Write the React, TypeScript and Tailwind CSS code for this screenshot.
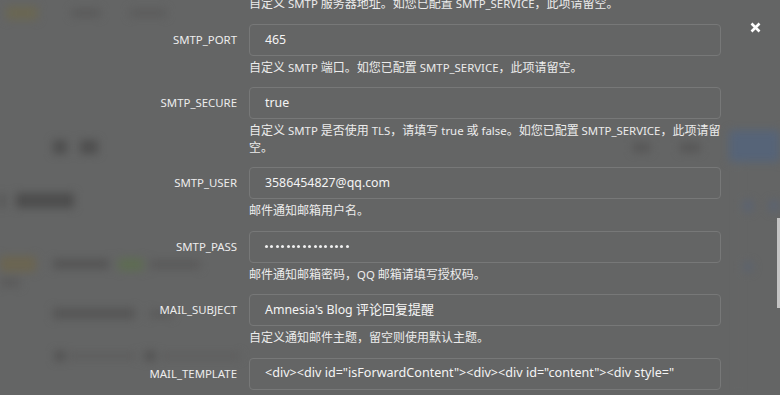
import React from "react";

type Row = {
  label: string;
  value?: string;
  password?: boolean;
  code?: boolean;
  help: string[];
};

const rows: Row[] = [
  {
    label: "SMTP_HOST",
    value: "",
    help: ["自定义 SMTP 服务器地址。如您已配置 SMTP_SERVICE，此项请留空。"],
  },
  {
    label: "SMTP_PORT",
    value: "465",
    help: ["自定义 SMTP 端口。如您已配置 SMTP_SERVICE，此项请留空。"],
  },
  {
    label: "SMTP_SECURE",
    value: "true",
    help: [
      "自定义 SMTP 是否使用 TLS，请填写 true 或 false。如您已配置 SMTP_SERVICE，此项请留",
      "空。",
    ],
  },
  {
    label: "SMTP_USER",
    value: "3586454827@qq.com",
    help: ["邮件通知邮箱用户名。"],
  },
  {
    label: "SMTP_PASS",
    value: "",
    password: true,
    help: ["邮件通知邮箱密码，QQ 邮箱请填写授权码。"],
  },
  {
    label: "MAIL_SUBJECT",
    value: "Amnesia's Blog 评论回复提醒",
    help: ["自定义通知邮件主题，留空则使用默认主题。"],
  },
  {
    label: "MAIL_TEMPLATE",
    value: '<div><div id="isForwardContent"><div><div id="content"><div style="',
    code: true,
    help: [],
  },
];

const dots = Array.from({ length: 16 }, (_, i) => i);

const cjk = /[\u3000-\u303f\u4e00-\u9fff\uff00-\uffef]/;

function Mixed({ text, latinClass }: { text: string; latinClass: string }) {
  const runs: { t: string; c: boolean }[] = [];
  for (const ch of text) {
    const c = cjk.test(ch);
    const last = runs[runs.length - 1];
    if (last && last.c === c) last.t += ch;
    else runs.push({ t: ch, c });
  }
  return (
    <span className="whitespace-pre">
      {runs.map((r, i) =>
        r.c ? (
          <span key={i}>{r.t}</span>
        ) : (
          <span key={i} className={latinClass}>
            {r.t}
          </span>
        )
      )}
    </span>
  );
}

function Background() {
  return (
    <div className="absolute inset-0 blur-[4px] pointer-events-none flex flex-col">
      <div className="h-[26px] flex items-center pl-[6px] shrink-0">
        <div className="w-[32px] h-[14px] rounded bg-[#6a6753]" />
        <div className="ml-[34px] w-[28px] h-[8px] bg-[#5a5a5a]" />
        <div className="ml-[30px] w-[36px] h-[8px] bg-[#5c5c5c]" />
      </div>
      <div className="flex flex-1">
        <div className="w-[729px] flex flex-col pt-[114px]">
          <div className="flex items-center pl-[53px] pr-[29px]">
            <div className="w-[14px] h-[14px] bg-[#4f4f4f]" />
            <div className="ml-[13px] w-[18px] h-[14px] bg-[#4f4f4f]" />
            <div className="ml-auto w-[17px] h-[9px] bg-[#565656]" />
            <div className="ml-[30px] w-[20px] h-[9px] bg-[#565656]" />
          </div>
          <div className="mt-[39px] flex items-center">
            <div className="w-[4px] h-[14px] bg-[#4f4f4f]" />
            <div className="ml-[12px] w-[58px] h-[15px] bg-[#4d4d4d]" />
          </div>
          <div className="mt-[48px] flex items-center">
            <div className="w-[36px] h-[16px] rounded bg-[#6b6551]" />
            <div className="ml-[17px] w-[56px] h-[10px] bg-[#555555]" />
            <div className="ml-[9px] w-[26px] h-[13px] rounded bg-[#5e6c53]" />
            <div className="ml-[6px] w-[50px] h-[9px] bg-[#5a5a5a]" />
          </div>
          <div className="mt-[6px] w-[20px] h-[9px] bg-[#5b5b5b]" />
          <div className="mt-[21px] flex items-center pl-[53px]">
            <div className="w-[82px] h-[11px] bg-[#565656]" />
            <div className="ml-[15px] w-[22px] h-[8px] bg-[#5b5b5b]" />
          </div>
          <div className="mt-[32px] flex items-center pl-[55px]">
            <div className="w-[10px] h-[10px] bg-[#525252]" />
            <div className="ml-[3px] w-[68px] h-[6px] bg-[#5d5d5d]" />
            <div className="ml-[9px] w-[10px] h-[10px] bg-[#525252]" />
            <div className="ml-[5px] w-[80px] h-[6px] bg-[#5e5e5e]" />
          </div>
        </div>
        <div className="flex-1 flex flex-col pt-[104px]">
          <div className="h-[32px] rounded bg-[#566478]" />
          <div className="ml-[9px] flex-1 border-l border-[#6b6c6c] flex flex-col">
            <div className="mt-[38px] flex gap-[16px] pl-[4px]">
              <div className="w-[10px] h-[12px] rounded-full bg-[#5a6373]" />
              <div className="w-[10px] h-[12px] rounded-full bg-[#5a6373]" />
            </div>
            <div className="mt-[50px] pl-[4px]">
              <div className="w-[10px] h-[10px] rounded-full bg-[#5b6370]" />
            </div>
          </div>
        </div>
      </div>
    </div>
  );
}

export default function App() {
  return (
    <div
      className="relative w-[780px] h-[395px] overflow-hidden bg-[#646565]"
      style={{ fontFamily: '"Noto Sans", "Noto Sans CJK SC", sans-serif' }}
    >
      <Background />
      <div className="relative flex flex-col mt-[-40px]">
        {rows.map((r) => (
          <div
            key={r.label}
            className="grid grid-cols-[237px_472px] gap-x-[12px] mb-[11px]"
          >
            <div className="h-[32px] flex items-center justify-end text-[11.4px] text-[#ededed]">
              {r.label}
            </div>
            <div className="flex flex-col">
              <div className="h-[32px] rounded-[4px] border border-[#777878] px-[15px] flex items-center text-[13px] text-[#f4f4f4] whitespace-nowrap overflow-hidden">
                {r.password ? (
                  <div className="flex items-center gap-[2.4px]">
                    {dots.map((d) => (
                      <span
                        key={d}
                        className="block w-[3px] h-[3px] rounded-full bg-[#f0f0f0]"
                      />
                    ))}
                  </div>
                ) : r.code ? (
                  <span className="text-[12.6px]">{r.value}</span>
                ) : (
                  <Mixed text={r.value ?? ""} latinClass="text-[12.35px]" />
                )}
              </div>
              {r.help.length > 0 && (
                <div className="mt-[4px] text-[12px] leading-[16.5px] text-[#ececec]">
                  {r.help.map((h, i) => (
                    <div key={i} className="whitespace-nowrap">
                      <Mixed text={h} latinClass="text-[11.4px]" />
                    </div>
                  ))}
                </div>
              )}
            </div>
          </div>
        ))}
      </div>
      <button className="absolute left-[749px] top-[21px] w-[12px] h-[12px] flex items-center justify-center">
        <svg width="11" height="11" viewBox="0 0 11 11">
          <path
            d="M1.5 1.5 L9.5 9.5 M9.5 1.5 L1.5 9.5"
            stroke="#ffffff"
            strokeWidth="2.6"
            strokeLinecap="butt"
          />
        </svg>
      </button>
      <div className="absolute right-0 top-[218px] w-[3px] h-[90px] bg-[#c4c4c4]" />
    </div>
  );
}
